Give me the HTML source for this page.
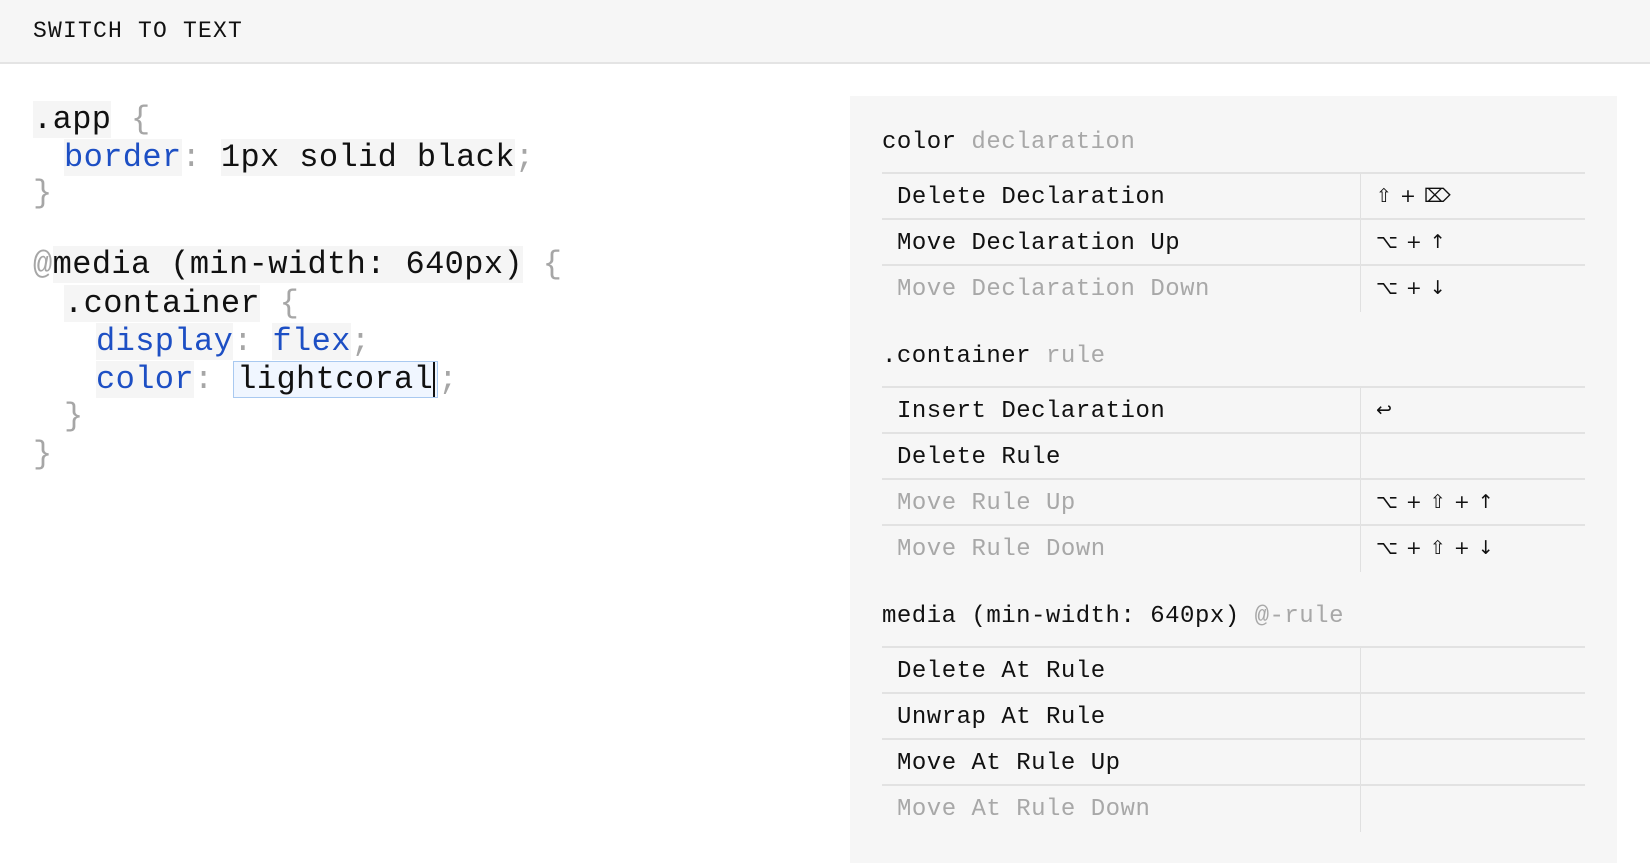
<!DOCTYPE html>
<html><head><meta charset="utf-8"><style>
*{margin:0;padding:0;box-sizing:border-box}
body{width:1650px;height:863px;background:#fff;position:relative;overflow:hidden;font-family:"Liberation Mono","DejaVu Sans Mono",monospace;color:#111}
.hdr{position:absolute;left:0;top:0;width:1650px;height:64px;background:#f6f6f6;border-bottom:2px solid #e4e4e4}
.hdr span{position:absolute;left:33px;top:17px;font-size:23px;letter-spacing:1.2px;line-height:28px}
.cl{position:absolute;height:38px;line-height:38px;font-size:32px;letter-spacing:.4px;white-space:pre}
.h{background:#f5f5f5}
.b{color:#1d4fc4}
.g{color:#a6a6a6}
.sel{background:#f0f6ff;outline:1px solid #a9c9f0;outline-offset:-1px;padding:0 3px 0 4px}
.panel{position:absolute;left:850px;top:96px;width:767px;height:767px;background:#f6f6f6}
.sec{position:absolute;left:882px;font-size:24px;letter-spacing:.5px;line-height:30px;white-space:pre}
.row{position:absolute;left:882px;width:703px;height:46px;border-top:2px solid #e2e2e2;font-size:24px;letter-spacing:.5px;line-height:48px}
.row .n{position:absolute;left:15px;top:0}
.row .k{position:absolute;left:478px;top:0;height:46px;border-left:1px solid #e0e0e0;padding-left:15px;font-family:"DejaVu Sans","Liberation Sans",sans-serif;font-size:19px;letter-spacing:0;word-spacing:2px;line-height:44px}
.d{color:#a8a8a8}
</style></head><body>
<div class="hdr"><span>SWITCH TO TEXT</span></div>

<div class="cl" style="left:33px;top:101px"><span class="h">.app</span> <span class="g">{</span></div>
<div class="cl" style="left:64px;top:139px"><span class="h b">border</span><span class="g">:</span> <span class="h">1px solid black</span><span class="g">;</span></div>
<div class="cl" style="left:33px;top:175px"><span class="g">}</span></div>
<div class="cl" style="left:33px;top:246px"><span class="g">@</span><span class="h">media (min-width: 640px)</span> <span class="g">{</span></div>
<div class="cl" style="left:64px;top:285px"><span class="h">.container</span> <span class="g">{</span></div>
<div class="cl" style="left:96px;top:323px"><span class="h b">display</span><span class="g">:</span> <span class="h b">flex</span><span class="g">;</span></div>
<div class="cl" style="left:96px;top:361px"><span class="h b">color</span><span class="g">:</span> <span class="sel">lightcoral<span style="border-right:2px solid #111"></span></span><span class="g">;</span></div>
<div class="cl" style="left:64px;top:398px"><span class="g">}</span></div>
<div class="cl" style="left:33px;top:436px"><span class="g">}</span></div>

<div class="panel"></div>
<div class="sec" style="top:128px">color <span class="d">declaration</span></div>
<div class="row" style="top:172px"><span class="n">Delete Declaration</span><span class="k">⇧ + ⌦</span></div>
<div class="row" style="top:218px"><span class="n">Move Declaration Up</span><span class="k">⌥ + ↑</span></div>
<div class="row" style="top:264px"><span class="n d">Move Declaration Down</span><span class="k">⌥ + ↓</span></div>

<div class="sec" style="top:342px">.container <span class="d">rule</span></div>
<div class="row" style="top:386px"><span class="n">Insert Declaration</span><span class="k">↩</span></div>
<div class="row" style="top:432px"><span class="n">Delete Rule</span><span class="k"></span></div>
<div class="row" style="top:478px"><span class="n d">Move Rule Up</span><span class="k">⌥ + ⇧ + ↑</span></div>
<div class="row" style="top:524px"><span class="n d">Move Rule Down</span><span class="k">⌥ + ⇧ + ↓</span></div>

<div class="sec" style="top:602px">media (min-width: 640px) <span class="d">@-rule</span></div>
<div class="row" style="top:646px"><span class="n">Delete At Rule</span><span class="k"></span></div>
<div class="row" style="top:692px"><span class="n">Unwrap At Rule</span><span class="k"></span></div>
<div class="row" style="top:738px"><span class="n">Move At Rule Up</span><span class="k"></span></div>
<div class="row" style="top:784px"><span class="n d">Move At Rule Down</span><span class="k"></span></div>
</body></html>
